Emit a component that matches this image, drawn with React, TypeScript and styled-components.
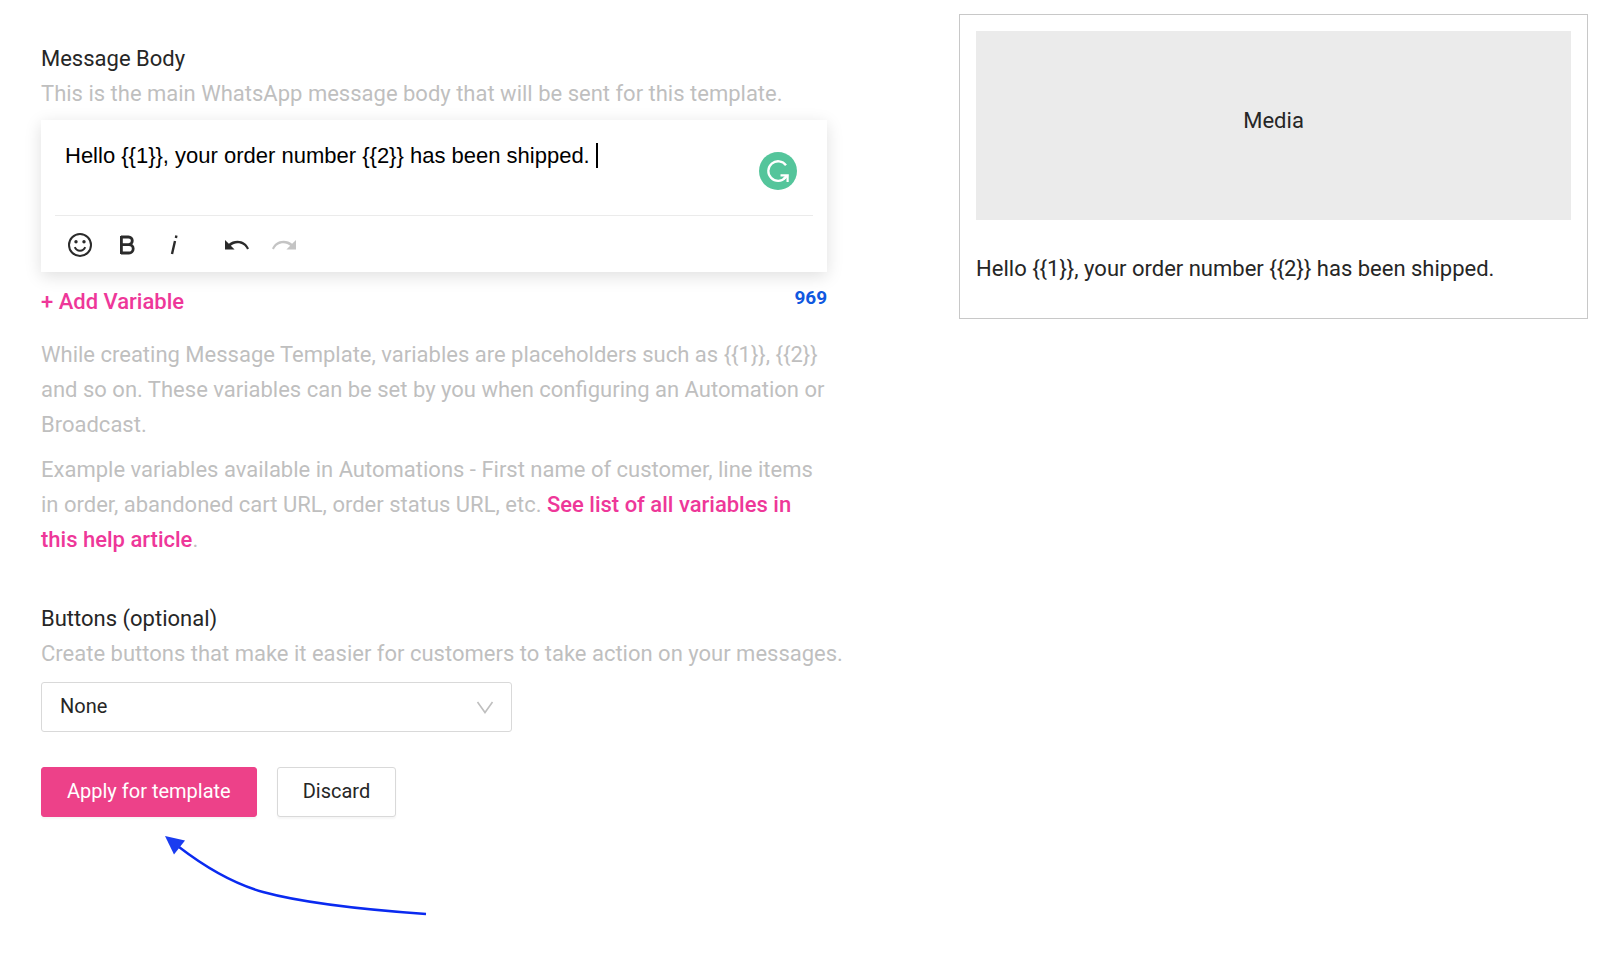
import React, { useId, useState } from "react";
import styled, { createGlobalStyle } from "styled-components";

const GlobalStyle = createGlobalStyle`
  *, *::before, *::after { box-sizing: border-box; }
  body {
    margin: 0;
    background: #fff;
    color: #262626;
    font: 400 22px/35px Roboto, "Liberation Sans", sans-serif;
  }
  button, select, textarea { font: inherit; color: inherit; }
  p { margin: 0; }
`;

const Page = styled.main`
  display: grid;
  grid-template-columns: 5fr 4fr;
  column-gap: 132px;
  align-items: start;
  padding: 14px 12px 40px 41px;
`;

const Form = styled.form`
  min-width: 0;
  padding-top: 27px;
`;

const FieldLabel = styled.label`
  display: block;
`;

const Hint = styled.p<{ $single?: boolean }>`
  color: #bfbfbf;
  white-space: ${(p) => (p.$single ? "nowrap" : "normal")};
`;

const HintGroup = styled.div`
  display: grid;
  row-gap: 10px;
  margin-top: 18px;
`;

const HelpLink = styled.a`
  color: #ee3799;
  font-weight: 500;
  text-decoration: none;
`;

const Editor = styled.div`
  position: relative;
  margin-top: 9px;
  padding: 0 14px;
  background: #fff;
  box-shadow: 0 4px 16px rgba(0, 0, 0, 0.13);
`;

const Writing = styled.div`
  display: flex;
  align-items: flex-start;
  height: 96px;
  padding: 18px 10px 0;
  border-bottom: 1px solid #ebebeb;
`;

const BodyText = styled.textarea`
  field-sizing: content;
  max-width: 100%;
  padding: 0;
  border: 0;
  outline: 0;
  resize: none;
  overflow: hidden;
  background: transparent;
  color: #000;
  font-family: "Liberation Sans", sans-serif;
`;

const Caret = styled.span`
  flex: none;
  width: 2px;
  height: 25px;
  margin-top: 5px;
  background: #000;
`;

const CheckerBadge = styled.button`
  position: absolute;
  top: 32px;
  right: 30px;
  width: 38px;
  height: 38px;
  padding: 0;
  border: 0;
  background: none;

  svg { display: block; }
`;

const Tools = styled.div`
  display: flex;
  align-items: center;
  gap: 7px;
  height: 56px;
  padding: 2px 5px 0;
`;

const Tool = styled.button<{ $spaced?: boolean }>`
  display: grid;
  place-items: center;
  width: 40px;
  height: 40px;
  margin: 0 0 0 ${(p) => (p.$spaced ? "16px" : "0")};
  padding: 0;
  border: 0;
  background: none;
  color: #2b2b2b;

  &:disabled { color: #c4c4c4; }
`;

const UnderEditor = styled.div`
  display: flex;
  justify-content: space-between;
  align-items: flex-start;
  padding-top: 12px;
`;

const AddVariable = styled.button`
  padding: 0;
  border: 0;
  background: none;
  color: #ee3799;
  font-weight: 500;
`;

const Remaining = styled.output`
  color: #1058e0;
  font-size: 19px;
  line-height: 28px;
  font-weight: 700;
`;

const ButtonsField = styled.div`
  margin-top: 44px;
`;

const SelectBox = styled.div`
  position: relative;
  max-width: 471px;
  margin-top: 11px;

  svg {
    position: absolute;
    right: 18px;
    top: 18px;
    pointer-events: none;
  }
`;

const Select = styled.select`
  appearance: none;
  display: block;
  width: 100%;
  height: 50px;
  padding: 0 48px 2px 18px;
  border: 1px solid #d9d9d9;
  border-radius: 3px;
  background: #fff;
  font-size: 20px;
`;

const Actions = styled.div`
  display: flex;
  gap: 20px;
  margin-top: 35px;
`;

const Action = styled.button<{ $primary?: boolean }>`
  height: 50px;
  padding: 0 25px 2px;
  border: 1px solid ${(p) => (p.$primary ? "#ed4189" : "#d9d9d9")};
  border-radius: 3px;
  background: ${(p) => (p.$primary ? "#ed4189" : "#fff")};
  color: ${(p) => (p.$primary ? "#fff" : "#262626")};
  box-shadow: 0 2px 2px rgba(0, 0, 0, 0.04);
  font-size: 20px;
`;

const Pointer = styled.svg`
  display: block;
  margin: 19px 0 0 124px;
`;

const Preview = styled.aside`
  padding: 16px;
  border: 1px solid #c8c8c8;
`;

const Media = styled.div`
  display: grid;
  place-items: center;
  height: 189px;
  padding-bottom: 10px;
  background: #ebebeb;
`;

const PreviewText = styled.p`
  padding: 31px 0 16px;
`;

const characterLimit = 1023;
const message = "Hello {{1}}, your order number {{2}} has been shipped. ";

export default function App() {
  const bodyId = useId();
  const buttonsId = useId();
  const [body, setBody] = useState(message);

  return (
    <>
      <GlobalStyle />
      <Page>
        <Form onSubmit={(e) => e.preventDefault()}>
          <FieldLabel htmlFor={bodyId}>Message Body</FieldLabel>
          <Hint $single>This is the main WhatsApp message body that will be sent for this template.</Hint>

          <Editor>
            <Writing>
              <BodyText id={bodyId} rows={1} spellCheck={false} value={body} onChange={(e) => setBody(e.target.value)} />
              <Caret />
            </Writing>
            <CheckerBadge type="button" aria-label="Check writing">
              <svg width="38" height="38" viewBox="0 0 38 38" fill="none">
                <circle cx="19" cy="19" r="19" fill="#54c59b" />
                <path d="M27 13.2A9.8 9.8 0 1 0 26.5 25.5" stroke="#fff" strokeWidth="2.3" />
                <path d="M21.5 23.3H29.8M28.6 23V30M28.6 23.3L24.5 27" stroke="#fff" strokeWidth="2.2" />
              </svg>
            </CheckerBadge>
            <Tools>
              <Tool type="button" aria-label="Emoji">
                <svg width="24" height="24" viewBox="0 0 24 24" fill="none" stroke="currentColor" strokeWidth="2">
                  <circle cx="12" cy="12" r="11" />
                  <path d="M6.8 14.2a5.6 5.6 0 0 0 10.4 0" />
                  <circle cx="8" cy="8.8" r="1.7" fill="currentColor" stroke="none" />
                  <circle cx="16" cy="8.8" r="1.7" fill="currentColor" stroke="none" />
                </svg>
              </Tool>
              <Tool type="button" aria-label="Bold">
                <svg width="16" height="20" viewBox="0 0 16 20" fill="none" stroke="currentColor" strokeWidth="2.8">
                  <path d="M2 2H9.5a3.8 3.8 0 0 1 0 7.6H2M2 9.6H10a4.1 4.1 0 0 1 0 8.4H2M2.4 1V19" />
                </svg>
              </Tool>
              <Tool type="button" aria-label="Italic">
                <svg width="10" height="20" viewBox="0 0 10 20" fill="none" stroke="currentColor" strokeWidth="2.4">
                  <path d="M6 6L3 19M7.4 .6L6.9 3" />
                </svg>
              </Tool>
              <Tool type="button" aria-label="Undo" $spaced>
                <svg width="24" height="10" viewBox="0 0 24 10" fill="currentColor">
                  <path d="M0 0V9.4H9.6L5.8 5.8C7.7 4.2 10 3.2 12.5 3.2C17 3.2 20.5 5.7 22 9.4L24 8.6C22.2 4 18 .8 12.5 .8C9 .8 6.2 2 3.9 3.8Z" />
                </svg>
              </Tool>
              <Tool type="button" aria-label="Redo" disabled>
                <svg width="24" height="10" viewBox="0 0 24 10" fill="currentColor">
                  <path d="M24 0V9.4H14.4L18.2 5.8C16.3 4.2 14 3.2 11.5 3.2C7 3.2 3.5 5.7 2 9.4L0 8.6C1.8 4 6 .8 11.5 .8C15 .8 17.8 2 20.1 3.8Z" />
                </svg>
              </Tool>
            </Tools>
          </Editor>

          <UnderEditor>
            <AddVariable type="button">+ Add Variable</AddVariable>
            <Remaining htmlFor={bodyId}>{characterLimit - body.trimEnd().length}</Remaining>
          </UnderEditor>

          <HintGroup>
            <Hint>
              While creating Message Template, variables are placeholders such as {"{{1}}, {{2}}"} and so on. These
              variables can be set by you when configuring an Automation or Broadcast.
            </Hint>
            <Hint>
              Example variables available in Automations - First name of customer, line items in order, abandoned cart
              URL, order status URL, etc. <HelpLink href="#help">See list of all variables in this help article</HelpLink>.
            </Hint>
          </HintGroup>

          <ButtonsField>
            <FieldLabel htmlFor={buttonsId}>Buttons (optional)</FieldLabel>
            <Hint $single>Create buttons that make it easier for customers to take action on your messages.</Hint>
            <SelectBox>
              <Select id={buttonsId} defaultValue="none">
                <option value="none">None</option>
              </Select>
              <svg width="18" height="16" viewBox="0 0 18 16" fill="none" stroke="#bfbfbf" strokeWidth="1.6">
                <path d="M1.5 2L9 12.5L16.5 2" />
              </svg>
            </SelectBox>
          </ButtonsField>

          <Actions>
            <Action type="submit" $primary>
              Apply for template
            </Action>
            <Action type="button">Discard</Action>
          </Actions>

          <Pointer width="264" height="82" viewBox="0 0 264 82" fill="none" aria-hidden="true">
            <path d="M14 11C40 31 66 47 98 56C138 67 190 73 261 78" stroke="#0a2af0" strokeWidth="2.4" />
            <path d="M0 0L20 4.5L9 18.5Z" fill="#1a3cf0" />
          </Pointer>
        </Form>

        <Preview aria-label="Preview">
          <Media>Media</Media>
          <PreviewText>{body}</PreviewText>
        </Preview>
      </Page>
    </>
  );
}
